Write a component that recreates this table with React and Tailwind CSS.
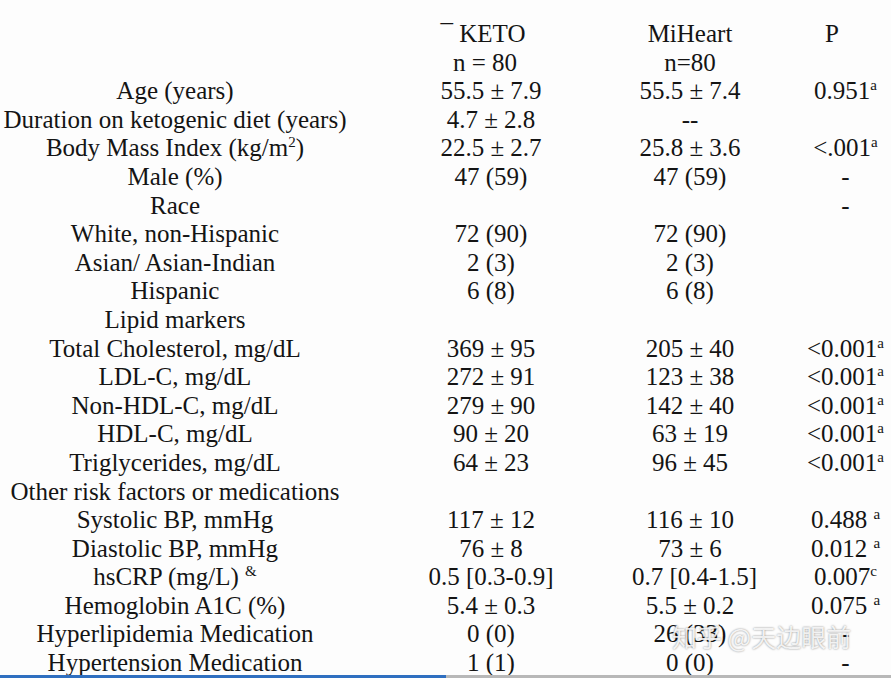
import React from 'react';

const rows = [
  { label: 'Age (years)', keto: '55.5 ± 7.9', mi: '55.5 ± 7.4', p: '0.951', sup: 'a' },
  { label: 'Duration on ketogenic diet (years)', keto: '4.7 ± 2.8', mi: '--', p: '' },
  { label: 'Body Mass Index (kg/m', labelSup: '2', labelEnd: ')', keto: '22.5 ± 2.7', mi: '25.8 ± 3.6', p: '<.001', sup: 'a' },
  { label: 'Male (%)', keto: '47 (59)', mi: '47 (59)', p: '-' },
  { label: 'Race', keto: '', mi: '', p: '-' },
  { label: 'White, non-Hispanic', keto: '72 (90)', mi: '72 (90)', p: '' },
  { label: 'Asian/ Asian-Indian', keto: '2 (3)', mi: '2 (3)', p: '' },
  { label: 'Hispanic', keto: '6 (8)', mi: '6 (8)', p: '' },
  { label: 'Lipid markers', keto: '', mi: '', p: '' },
  { label: 'Total Cholesterol, mg/dL', keto: '369 ± 95', mi: '205 ± 40', p: '<0.001', sup: 'a' },
  { label: 'LDL-C, mg/dL', keto: '272 ± 91', mi: '123 ± 38', p: '<0.001', sup: 'a' },
  { label: 'Non-HDL-C, mg/dL', keto: '279 ± 90', mi: '142 ± 40', p: '<0.001', sup: 'a' },
  { label: 'HDL-C, mg/dL', keto: '90 ± 20', mi: '63 ± 19', p: '<0.001', sup: 'a' },
  { label: 'Triglycerides, mg/dL', keto: '64 ± 23', mi: '96 ± 45', p: '<0.001', sup: 'a' },
  { label: 'Other risk factors or medications', keto: '', mi: '', p: '' },
  { label: 'Systolic BP, mmHg', keto: '117 ± 12', mi: '116 ± 10', p: '0.488 ', sup: 'a' },
  { label: 'Diastolic BP, mmHg', keto: '76 ± 8', mi: '73 ± 6', p: '0.012 ', sup: 'a' },
  { label: 'hsCRP (mg/L) ', labelSup: '&', keto: '0.5 [0.3-0.9]', mi: '0.7 [0.4-1.5]', p: '0.007', sup: 'c' },
  { label: 'Hemoglobin A1C (%)', keto: '5.4 ± 0.3', mi: '5.5 ± 0.2', p: '0.075 ', sup: 'a' },
  { label: 'Hyperlipidemia Medication', keto: '0 (0)', mi: '26 (33)', p: '-' },
  { label: 'Hypertension Medication', keto: '1 (1)', mi: '0 (0)', p: '-' },
];

function Row({ r }) {
  return (
    <div className="grid grid-cols-[350px_282px_116px_143px] leading-[28.6px] whitespace-nowrap">
      <div className="text-center">
        {r.label}
        {r.labelSup && <sup className="text-[15px] leading-none top-[-9px]">{r.labelSup}</sup>}
        {r.labelEnd}
      </div>
      <div className="text-center">{r.keto}</div>
      <div className="text-center">{r.mi}</div>
      <div className="text-center pl-[52px]">
        {r.p}
        {r.sup && <sup className="text-[15px] leading-none top-[-9px]">{r.sup}</sup>}
      </div>
    </div>
  );
}

export default function App() {
  return (
    <div className="relative h-[678px] w-[891px] overflow-hidden bg-[#fdfdfd] text-[#141414] text-[25px] font-['Liberation_Serif',serif]">
      <div className="pt-[20px]">
        <div className="grid grid-cols-[350px_282px_116px_143px] leading-[28.6px] whitespace-nowrap">
          <div></div>
          <div className="text-center pr-[16px]">¯ KETO</div>
          <div className="text-center">MiHeart</div>
          <div className="text-center pl-[25px]">P</div>
        </div>
        <div className="grid grid-cols-[350px_282px_116px_143px] leading-[28.6px] whitespace-nowrap">
          <div></div>
          <div className="text-center pr-[12px]">n = 80</div>
          <div className="text-center">n=80</div>
          <div></div>
        </div>
        {rows.map((r, i) => (
          <Row key={i} r={r} />
        ))}
      </div>

      <div className="absolute left-[672px] top-[621px] text-[25px] leading-[30px] text-white/85 font-['Noto_Sans_CJK_SC',sans-serif] [text-shadow:0_0_2px_rgba(0,0,0,0.5)]">
        知乎 @天边眼前
      </div>

      <div className="absolute bottom-0 left-0 flex h-[3px] w-full">
        <div className="h-full w-[446px] bg-[#2f6fc0]"></div>
        <div className="h-full flex-1 bg-[#b8b8b8]"></div>
      </div>
    </div>
  );
}
